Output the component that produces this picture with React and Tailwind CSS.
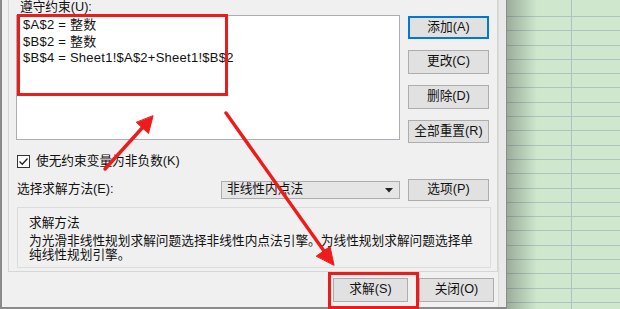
import React from "react";

const F = "font-['Liberation_Sans','Noto_Sans_CJK_SC',sans-serif]";

function Btn({ children, focused, className = "" }) {
  return (
    <div
      className={`flex items-center justify-center bg-[#e1e1e1] text-[12.7px] text-[#111] ${
        focused ? "border-2 border-[#0078d7]" : "border border-[#adadad]"
      } ${className}`}
    >
      {children}
    </div>
  );
}

function Arrows() {
  return (
    <svg className="absolute left-0 top-0" width="620" height="309" viewBox="0 0 620 309">
      <g fill="#ee1b1b" stroke="#ee1b1b" strokeLinecap="round">
        <line x1="105" y1="169" x2="143" y2="127" strokeWidth="3.4" />
        <polygon points="153,116 148.5,133.5 136.5,122.5" strokeWidth="1" strokeLinejoin="round" />
        <line x1="226" y1="113" x2="324" y2="251" strokeWidth="3.4" />
        <polygon points="334,265 330,246.5 316.5,256" strokeWidth="1" strokeLinejoin="round" />
      </g>
    </svg>
  );
}

export default function App() {
  const rows = Array.from({ length: 22 });
  return (
    <div className={`relative flex h-[309px] w-[620px] overflow-hidden ${F}`}>
      {/* dialog */}
      <div className="flex h-[309px] w-[507px] shrink-0 border-b-2 border-l-2 border-[#8a8a8a] bg-[#f0f0f0]">
        <div className="flex w-[496px] flex-col">
          {/* frame */}
          <div className="ml-[6px] flex h-[272px] w-[490px] flex-col border-x border-b border-[#d6d6d6]">
            <div className="h-[15px] pl-[11px] text-[12.7px] leading-[15px] text-[#111]">遵守约束(U):</div>
            <div className="flex">
              <div className="ml-[7px] h-[125px] w-[384px] border border-[#abadb3] bg-white pl-[6px] pt-[1px] text-[13px] leading-[16.5px] tracking-[0.25px] text-[#111]">
                <div>$A$2 = 整数</div>
                <div>$B$2 = 整数</div>
                <div>$B$4 = Sheet1!$A$2+Sheet1!$B$2</div>
              </div>
              <div className="ml-[8px] flex w-[81px] flex-col gap-[11px] pt-[1px]">
                <Btn focused className="h-[23px]">添加(A)</Btn>
                <Btn className="h-[24px]">更改(C)</Btn>
                <Btn className="h-[24px]">删除(D)</Btn>
                <Btn className="h-[23px]">全部重置(R)</Btn>
              </div>
            </div>
            {/* checkbox */}
            <div className="ml-[8px] mt-[12px] flex h-[13px] items-center gap-[6px]">
              <div className="flex h-[13px] w-[13px] items-center justify-center border border-[#333] bg-white">
                <svg width="11" height="11" viewBox="0 0 11 11">
                  <path d="M1.5 5.5 L4.3 8.3 L9.5 2.5" fill="none" stroke="#222" strokeWidth="1.3" />
                </svg>
              </div>
              <span className="text-[12.7px] leading-[13px] text-[#111]">使无约束变量为非负数(K)</span>
            </div>
            {/* method row */}
            <div className="ml-[8px] mt-[11px] flex h-[22px] items-center">
              <span className="w-[204px] text-[12.7px] text-[#111]">选择求解方法(E):</span>
              <div className="flex h-[18px] w-[179px] items-center justify-between border border-[#adadad] bg-[#e5e5e5] pl-[5px] pr-[6px] text-[12.7px] text-[#111]">
                <span>非线性内点法</span>
                <svg width="8" height="5" viewBox="0 0 8 5">
                  <path d="M0 0 H8 L4 4.5 Z" fill="#222" />
                </svg>
              </div>
              <Btn className="ml-[8px] h-[22px] w-[81px]">选项(P)</Btn>
            </div>
            {/* group box */}
            <div className="ml-[8px] mt-[6px] h-[61px] w-[474px] border border-[#dcdcdc] pl-[11px] pt-[8px] text-[12.7px] leading-[14px] text-[#111]">
              <div>求解方法</div>
              <div className="mt-[4px] whitespace-nowrap">
                为光滑非线性规划求解问题选择非线性内点法引擎。为线性规划求解问题选择单
                <br />
                纯线性规划引擎。
              </div>
            </div>
          </div>
          {/* bottom buttons */}
          <div className="flex justify-end gap-[11px] pr-[4px] pt-[6px]">
            <Btn className="h-[24px] w-[75px]">求解(S)</Btn>
            <Btn className="h-[24px] w-[75px]">关闭(O)</Btn>
          </div>
        </div>
        <div className="w-[9px] border-l border-r border-l-[#dadada] border-r-[#8c8c8c] bg-[#e9e9e9]" />
      </div>

      {/* spreadsheet */}
      <div className="relative flex-1 bg-[#cee7cd]">
        <div className="flex h-full">
          <div className="w-[65px] border-r border-[#adc3bf]">
            <div className="h-[17px] border-b border-[#adc3bf]" />
            {rows.map((_, i) => (
              <div key={i} className="h-[14.3px] border-b border-[#adc3bf]" />
            ))}
          </div>
          <div className="flex-1">
            <div className="h-[17px] border-b border-[#adc3bf]" />
            {rows.map((_, i) => (
              <div key={i} className="h-[14.3px] border-b border-[#adc3bf]" />
            ))}
          </div>
        </div>
        <div className="absolute inset-y-0 left-0 w-[30px] bg-gradient-to-r from-black/25 to-transparent" />
      </div>

      {/* annotations */}
      <div className="absolute left-[17px] top-[14px] h-[82px] w-[211px] border-[3px] border-[#ee1b1b]" />
      <div className="absolute left-[328px] top-[272px] h-[37px] w-[91px] border-[3px] border-[#ee1b1b]" />
      <Arrows />
    </div>
  );
}
